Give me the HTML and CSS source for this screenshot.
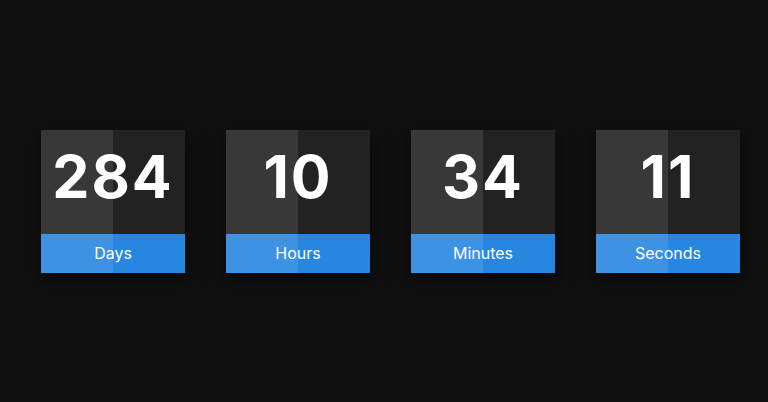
FILE: index.html
```html
<!DOCTYPE html>
<html lang="en">
<head>
    <meta charset="UTF-8">
    <meta name="viewport" content="width=device-width, initial-scale=1.0">
    <title>Countdown</title>
    <link rel="stylesheet" href="styles.css">
</head>
<body>
    <div class="countdown">
        <div class="unit">
            <div class="value">284</div>
            <div class="label">Days</div>
        </div>
        <div class="unit">
            <div class="value">10</div>
            <div class="label">Hours</div>
        </div>
        <div class="unit">
            <div class="value">34</div>
            <div class="label">Minutes</div>
        </div>
        <div class="unit">
            <div class="value">11</div>
            <div class="label">Seconds</div>
        </div>
    </div>
</body>
</html>
```

FILE: styles.css
```css
* {
    margin: 0;
    padding: 0;
    box-sizing: border-box;
}

body {
    font-family: Inter, "Open Sans", sans-serif;
    min-height: 100vh;
    background-color: #111111;
    display: flex;
    align-items: center;
}

.countdown {
    display: flex;
    gap: 41px;
    padding-left: 41px;
}

.unit {
    position: relative;
    width: 144px;
    box-shadow: 0 6px 18px rgba(0, 0, 0, 0.6);
}

/* lighter left half, like a folded card */
.unit::after {
    content: "";
    position: absolute;
    top: 0;
    left: 0;
    width: 50%;
    height: 100%;
    background-color: rgba(255, 255, 255, 0.1);
    pointer-events: none;
}

.value {
    height: 104px;
    background-color: #222222;
    color: white;
    font-size: 59px;
    font-weight: 700;
    letter-spacing: 2px;
    display: flex;
    justify-content: center;
    align-items: center;
    padding-bottom: 10px;
}

.label {
    height: 39px;
    background-color: #2786e0;
    color: white;
    font-size: 16px;
    display: flex;
    justify-content: center;
    align-items: center;
}
```
